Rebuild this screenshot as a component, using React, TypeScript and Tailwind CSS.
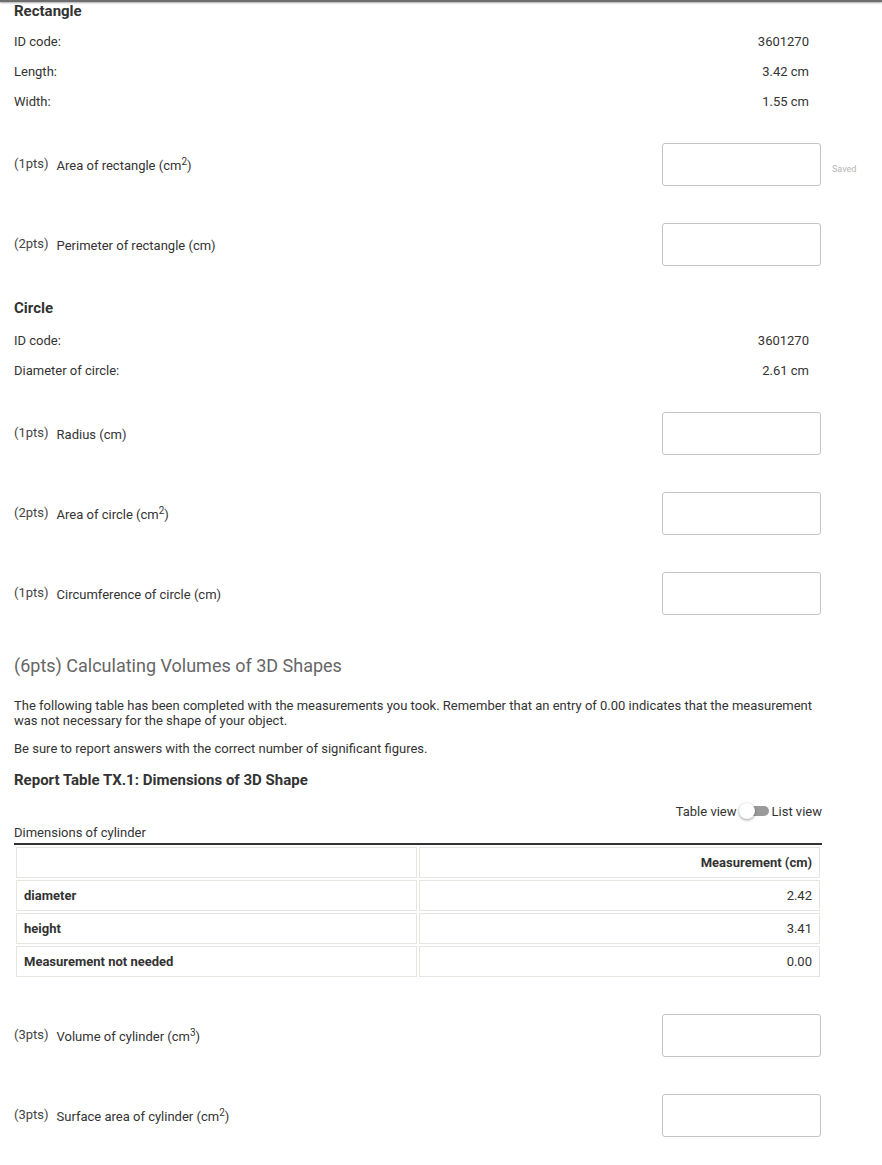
import React from "react";

type InfoRow = { label: string; value: string };

const Info: React.FC<{ rows: InfoRow[] }> = ({ rows }) => (
  <div>
    {rows.map((r) => (
      <div key={r.label} className="flex h-[30px] items-center justify-between">
        <span>{r.label}</span>
        <span className="pr-[13px]">{r.value}</span>
      </div>
    ))}
  </div>
);

const Question: React.FC<{ pts: string; children: React.ReactNode; className?: string; saved?: boolean }> = ({
  pts,
  children,
  className = "",
  saved,
}) => (
  <div className={`relative flex h-[43px] items-center justify-between ${className}`}>
    <div className="flex items-start gap-[8px]">
      <span className="text-[#444]">({pts})</span>
      <span className="mt-[2px]">{children}</span>
    </div>
    <input className="mr-[1px] h-[43px] w-[159px] rounded-[3px] border border-[#c4c4c4] bg-white px-2 outline-none" />
    {saved && (
      <span className="absolute left-[818px] top-[19px] text-[9px] text-[#b5b5b5]">Saved</span>
    )}
  </div>
);

const Sup: React.FC<{ n: string }> = ({ n }) => <sup className="top-[-0.55em] text-[10px]">{n}</sup>;

const rows = [
  { name: "diameter", value: "2.42" },
  { name: "height", value: "3.41" },
  { name: "Measurement not needed", value: "0.00" },
];

export default function App() {
  return (
    <div className="min-h-screen bg-white font-['Roboto',sans-serif] text-[13px] leading-[15px] text-[#333]">
      <div className="h-[2px] bg-[#6e6e6e] shadow-[0_1px_2px_rgba(0,0,0,0.35)]" />
      <div className="ml-[14px] w-[808px] pb-[29px]">
        <h3 className="text-[15px] font-bold leading-[18px] text-[#333]">Rectangle</h3>
        <div className="mt-[6px]">
          <Info
            rows={[
              { label: "ID code:", value: "3601270" },
              { label: "Length:", value: "3.42 cm" },
              { label: "Width:", value: "1.55 cm" },
            ]}
          />
        </div>
        <Question pts="1pts" className="mt-[27px]" saved>
          Area of rectangle (cm<Sup n="2" />)
        </Question>
        <Question pts="2pts" className="mt-[37px]">
          Perimeter of rectangle (cm)
        </Question>

        <h3 className="mt-[33px] text-[15px] font-bold leading-[18px] text-[#333]">Circle</h3>
        <div className="mt-[8px]">
          <Info
            rows={[
              { label: "ID code:", value: "3601270" },
              { label: "Diameter of circle:", value: "2.61 cm" },
            ]}
          />
        </div>
        <Question pts="1pts" className="mt-[27px]">
          Radius (cm)
        </Question>
        <Question pts="2pts" className="mt-[37px]">
          Area of circle (cm<Sup n="2" />)
        </Question>
        <Question pts="1pts" className="mt-[37px]">
          Circumference of circle (cm)
        </Question>

        <h2 className="mt-[39px] text-[18px] leading-[24px] text-[#666]">
          (6pts) Calculating Volumes of 3D Shapes
        </h2>
        <p className="mt-[20px]">
          The following table has been completed with the measurements you took. Remember that an entry of 0.00
          indicates that the measurement was not necessary for the shape of your object.
        </p>
        <p className="mt-[13px]">Be sure to report answers with the correct number of significant figures.</p>
        <h3 className="mt-[15px] text-[15px] font-bold leading-[18px] text-[#333]">
          Report Table TX.1: Dimensions of 3D Shape
        </h3>

        <div className="mt-[12px] flex h-[20px] items-center justify-end">
          <span>Table view</span>
          <div className="relative ml-[2px] mr-[3px] h-[16px] w-[30px]">
            <div className="absolute left-[3px] top-[3px] h-[10px] w-[27px] rounded-full bg-[#9a9a9a]" />
            <div className="absolute left-0 top-0 h-[16px] w-[16px] rounded-full bg-white shadow-[0_1px_3px_rgba(0,0,0,0.4)]" />
          </div>
          <span>List view</span>
        </div>
        <div className="mt-[4px]">Dimensions of cylinder</div>

        <div className="mt-[3px] border-t-2 border-[#333]">
          <table className="w-full border-separate border-spacing-[2px]">
            <thead>
              <tr>
                <th className="h-[31px] w-1/2 border border-[#e6e6e0]" />
                <th className="h-[31px] w-1/2 border border-[#e6e6e0] px-[7px] text-right font-bold">
                  Measurement (cm)
                </th>
              </tr>
            </thead>
            <tbody>
              {rows.map((r) => (
                <tr key={r.name}>
                  <td className="h-[31px] border border-[#e6e6e0] px-[7px] text-left font-bold">{r.name}</td>
                  <td className="h-[31px] border border-[#e6e6e0] px-[7px] text-right">{r.value}</td>
                </tr>
              ))}
            </tbody>
          </table>
        </div>

        <Question pts="3pts" className="mt-[35px]">
          Volume of cylinder (cm<Sup n="3" />)
        </Question>
        <Question pts="3pts" className="mt-[37px]">
          Surface area of cylinder (cm<Sup n="2" />)
        </Question>
      </div>
    </div>
  );
}
